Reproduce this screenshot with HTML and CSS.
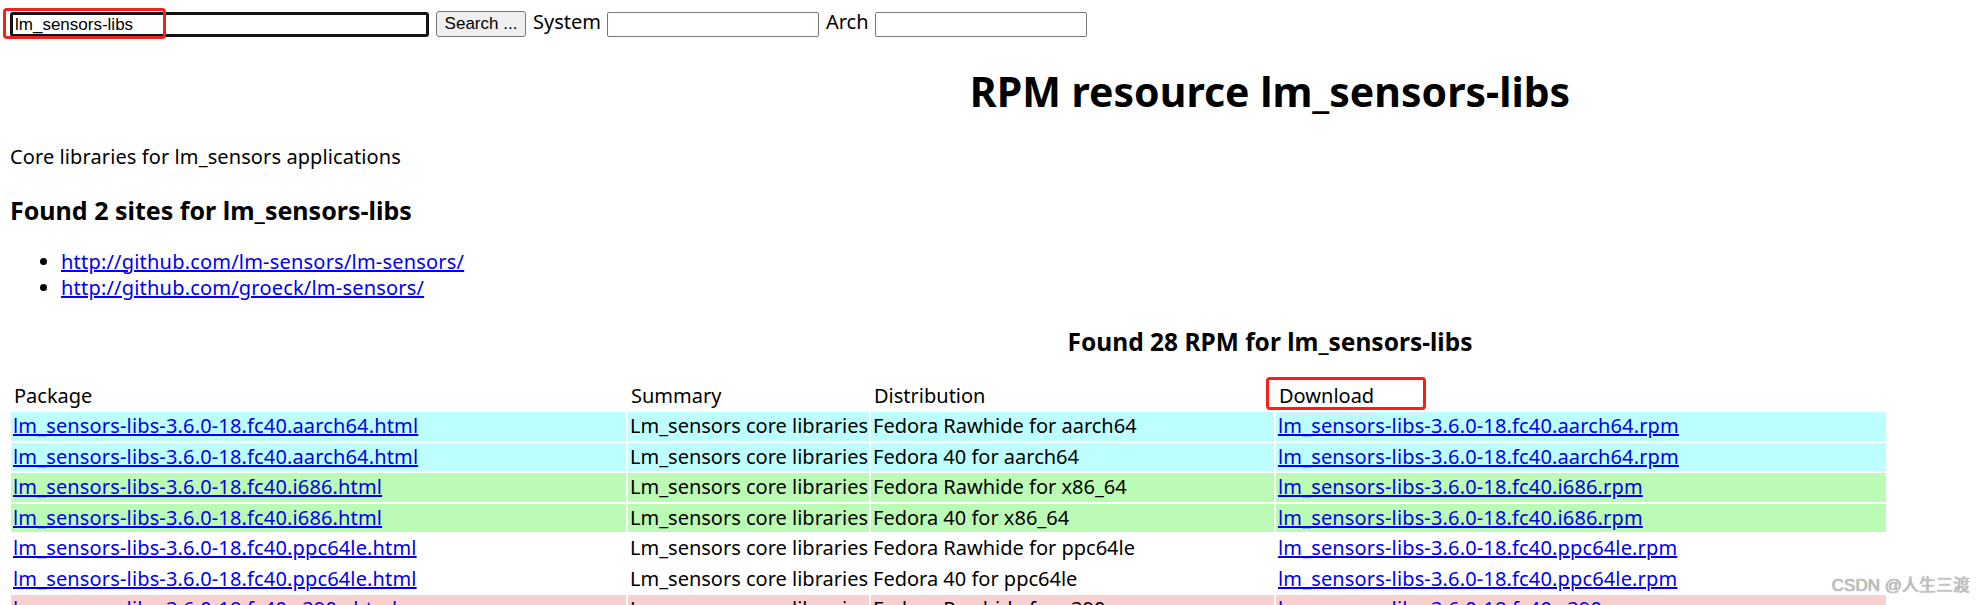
FILE: index.html
```html
<!DOCTYPE html>
<html lang="en">
<head>
<meta charset="utf-8">
<title>RPM resource lm_sensors-libs</title>
<link rel="stylesheet" href="styles.css">
</head>
<body>
<div class="page">
  <form class="search-bar">
    <span class="query-wrap">
      <input class="field field-query is-focused" type="text" value="lm_sensors-libs">
      <span class="mark mark-query"></span>
    </span>
    <button class="btn" type="button">Search ...</button>
    <span class="label">System</span>
    <input class="field field-small" type="text">
    <span class="label">Arch</span>
    <input class="field field-small" type="text">
  </form>

  <h1 class="title wide-center">RPM resource lm_sensors-libs</h1>

  <p class="summary">Core libraries for lm_sensors applications</p>

  <h3 class="section">Found 2 sites for lm_sensors-libs</h3>
  <ul class="sites">
    <li><a href="#">http://github.com/lm-sensors/lm-sensors/</a></li>
    <li><a href="#">http://github.com/groeck/lm-sensors/</a></li>
  </ul>

  <h3 class="section section-rpm wide-center">Found 28 RPM for lm_sensors-libs</h3>

  <table class="rpms">
    <colgroup>
      <col class="c-pkg"><col class="c-sum"><col class="c-dist"><col class="c-dl">
    </colgroup>
    <thead>
      <tr>
        <th>Package</th>
        <th>Summary</th>
        <th>Distribution</th>
        <th class="dl-head">Download<span class="mark mark-dl"></span></th>
      </tr>
    </thead>
    <tbody>
      <tr class="row-cyan">
        <td><a href="#">lm_sensors-libs-3.6.0-18.fc40.aarch64.html</a></td>
        <td>Lm_sensors core libraries</td>
        <td>Fedora Rawhide for aarch64</td>
        <td><a href="#">lm_sensors-libs-3.6.0-18.fc40.aarch64.rpm</a></td>
      </tr>
      <tr class="row-cyan">
        <td><a href="#">lm_sensors-libs-3.6.0-18.fc40.aarch64.html</a></td>
        <td>Lm_sensors core libraries</td>
        <td>Fedora 40 for aarch64</td>
        <td><a href="#">lm_sensors-libs-3.6.0-18.fc40.aarch64.rpm</a></td>
      </tr>
      <tr class="row-green">
        <td><a href="#">lm_sensors-libs-3.6.0-18.fc40.i686.html</a></td>
        <td>Lm_sensors core libraries</td>
        <td>Fedora Rawhide for x86_64</td>
        <td><a href="#">lm_sensors-libs-3.6.0-18.fc40.i686.rpm</a></td>
      </tr>
      <tr class="row-green">
        <td><a href="#">lm_sensors-libs-3.6.0-18.fc40.i686.html</a></td>
        <td>Lm_sensors core libraries</td>
        <td>Fedora 40 for x86_64</td>
        <td><a href="#">lm_sensors-libs-3.6.0-18.fc40.i686.rpm</a></td>
      </tr>
      <tr class="row-white">
        <td><a href="#">lm_sensors-libs-3.6.0-18.fc40.ppc64le.html</a></td>
        <td>Lm_sensors core libraries</td>
        <td>Fedora Rawhide for ppc64le</td>
        <td><a href="#">lm_sensors-libs-3.6.0-18.fc40.ppc64le.rpm</a></td>
      </tr>
      <tr class="row-white">
        <td><a href="#">lm_sensors-libs-3.6.0-18.fc40.ppc64le.html</a></td>
        <td>Lm_sensors core libraries</td>
        <td>Fedora 40 for ppc64le</td>
        <td><a href="#">lm_sensors-libs-3.6.0-18.fc40.ppc64le.rpm</a></td>
      </tr>
      <tr class="row-pink">
        <td><a href="#">lm_sensors-libs-3.6.0-18.fc40.s390x.html</a></td>
        <td>Lm_sensors core libraries</td>
        <td>Fedora Rawhide for s390x</td>
        <td><a href="#">lm_sensors-libs-3.6.0-18.fc40.s390x.rpm</a></td>
      </tr>
    </tbody>
  </table>
</div>
<div class="watermark">CSDN @人生三渡</div>
</body>
</html>
```

FILE: styles.css
```css
html, body {
  margin: 0;
  padding: 0;
  background: #ffffff;
  overflow: hidden;
  height: 605px;
}

body {
  position: relative;
  font-family: "Noto Sans", "Noto Sans CJK SC", sans-serif;
  font-size: 20px;
  line-height: 26.5px;
  color: #000000;
}

.page {
  padding: 10px;
}

/* ---------- search bar ---------- */
.search-bar {
  display: flex;
  align-items: flex-start;
  height: 28px;
  margin: 0;
}

.query-wrap {
  position: relative;
  display: block;
}

.field {
  display: block;
  box-sizing: border-box;
  height: 25px;
  margin-top: 2px;
  padding: 0 2px;
  border: 1px solid #767676;
  border-radius: 2px;
  background: #ffffff;
  font-family: "Liberation Sans", Arial, sans-serif;
  font-size: 17px;
  color: #000000;
}

.field-query {
  width: 419px;
  padding-left: 2px;
}

.field-query.is-focused {
  border: 3px solid #111111;
  border-radius: 3px;
  outline: none;
}

.field-small {
  width: 212px;
}

.btn {
  box-sizing: border-box;
  height: 26px;
  width: 90px;
  margin: 1px 0 0 7px;
  padding: 0;
  border: 1px solid #767676;
  border-radius: 3px;
  background: #efefef;
  font-family: "Liberation Sans", Arial, sans-serif;
  font-size: 17px;
  color: #000000;
}

.label {
  display: block;
  margin: -1.5px 6px 0 7px;
  line-height: 26.5px;
}

/* red annotation marks laid over the page */
.mark {
  position: absolute;
  box-sizing: border-box;
  border: 3px solid #f5201d;
  border-radius: 4px;
  pointer-events: none;
}

.mark-query {
  left: -7px;
  top: -2px;
  width: 163px;
  height: 31px;
}

/* ---------- headings & text ---------- */
.wide-center {
  padding-left: 554px;
  text-align: center;
}

.title {
  margin: 27px 0 0;
  font-size: 41px;
  line-height: 53px;
  font-weight: 700;
}

.summary {
  margin: 26px 0 0;
  letter-spacing: 0.1px;
}

.section {
  margin: 24px 0 0;
  font-size: 25px;
  line-height: 31px;
  font-weight: 700;
}

.section-rpm {
  font-size: 24.5px;
}

.sites {
  margin: 23px 0 0;
  padding-left: 51px;
  letter-spacing: 0.2px;
}

a {
  color: #0000ee;
  text-decoration: underline;
}

/* ---------- table ---------- */
.rpms {
  margin-top: 23px;
  margin-left: -1px;
  border-spacing: 2px;
  table-layout: fixed;
  width: 1879px;
}

.c-pkg { width: 615px; }
.c-sum { width: 241px; }
.c-dist { width: 403px; }
.c-dl { width: 610px; }

.rpms th,
.rpms td {
  box-sizing: border-box;
  padding: 1px 2px;
  line-height: 26.5px;
  text-align: left;
  font-weight: 400;
  white-space: nowrap;
  overflow: hidden;
}

.rpms td a {
  letter-spacing: 0.15px;
}

.rpms th {
  padding-left: 3px;
}

.dl-head {
  position: relative;
  overflow: visible !important;
}

.mark-dl {
  left: -10px;
  top: -5px;
  width: 160px;
  height: 33px;
}

.row-cyan td { background: #bdffff; }
.row-green td { background: #bbfbb6; }
.row-white td { background: #ffffff; }
.row-pink td { background: #f9d0d0; }

/* ---------- watermark ---------- */
.watermark {
  position: absolute;
  right: 16px;
  bottom: 8px;
  font-family: "Liberation Sans", "Noto Sans CJK SC", sans-serif;
  font-size: 17px;
  line-height: 22px;
  color: #c4c4c4;
  text-shadow: 0 0 1px #6e6e6e;
  white-space: nowrap;
}
```
